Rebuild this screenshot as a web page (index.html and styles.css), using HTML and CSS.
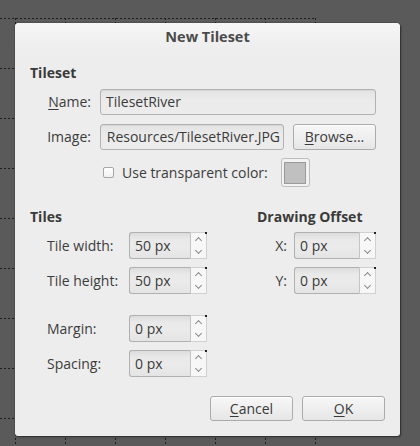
FILE: index.html
```html
<!DOCTYPE html>
<html>
<head>
<meta charset="utf-8">
<title>New Tileset</title>
<link rel="stylesheet" href="styles.css">
</head>
<body>
<svg class="map" width="420" height="446" viewBox="0 0 420 446" aria-hidden="true">
  <g stroke="#1e1e1e" stroke-width="1" stroke-dasharray="2 2" fill="none">
    <path d="M0 18.5H316M0 68.5H316M0 118.5H316M0 168.5H316M0 218.5H316M0 268.5H316M0 318.5H316M0 368.5H316M0 418.5H316"/>
    <path d="M15.5 18V446M65.5 18V446M115.5 18V446M165.5 18V446M215.5 18V446M265.5 18V446M315.5 18V446"/>
  </g>
</svg>
<div class="dialog">
  <div class="titlebar">New Tileset</div>
  <div class="content">
    <div class="group-title first">Tileset</div>
    <div class="tileset-grid">
      <label class="lbl right"><u>N</u>ame:</label>
      <div class="field">TilesetRiver</div>
      <label class="lbl right">Image:</label>
      <div class="image-row">
        <div class="field image-field"><span>Resources/TilesetRiver.JPG</span></div>
        <div class="btn browse"><u>B</u>rowse...</div>
      </div>
      <div class="check-row">
        <span class="checkbox"></span>
        <span class="check-text">Use transparent color:</span>
        <span class="swatch"><span class="swatch-inner"></span></span>
      </div>
    </div>

    <div class="tiles-section">
      <div class="tiles-group">
        <div class="group-title">Tiles</div>
        <div class="spin-grid">
          <span class="lbl">Tile width:</span>
          <div class="spin"><span class="spin-field">50 px</span><span class="spin-arrows"><span class="up"></span><span class="down"></span></span></div>
          <span class="lbl">Tile height:</span>
          <div class="spin"><span class="spin-field">50 px</span><span class="spin-arrows"><span class="up"></span><span class="down"></span></span></div>
          <span class="lbl spaced">Margin:</span>
          <div class="spin spaced"><span class="spin-field">0 px</span><span class="spin-arrows"><span class="up"></span><span class="down"></span></span></div>
          <span class="lbl">Spacing:</span>
          <div class="spin"><span class="spin-field">0 px</span><span class="spin-arrows"><span class="up"></span><span class="down"></span></span></div>
        </div>
      </div>
      <div class="offset-group">
        <div class="group-title">Drawing Offset</div>
        <div class="offset-grid">
          <span class="lbl right">X:</span>
          <div class="spin wide"><span class="spin-field">0 px</span><span class="spin-arrows"><span class="up"></span><span class="down"></span></span></div>
          <span class="lbl right">Y:</span>
          <div class="spin wide"><span class="spin-field">0 px</span><span class="spin-arrows"><span class="up"></span><span class="down"></span></span></div>
        </div>
      </div>
    </div>

    <div class="buttons">
      <div class="btn action"><u>C</u>ancel</div>
      <div class="btn action"><u>O</u>K</div>
    </div>
  </div>
</div>
</body>
</html>
```

FILE: styles.css
```css
html, body {
  margin: 0;
  padding: 0;
}
body {
  width: 420px;
  height: 446px;
  background: #5a5a5a;
  position: relative;
  overflow: hidden;
  font-family: "Open Sans", "Noto Sans", sans-serif;
  font-size: 14px;
  color: #3c3c3c;
}
.map {
  position: absolute;
  left: 0;
  top: 0;
}
.dialog {
  position: relative;
  margin: 23px 0 0 15px;
  width: 385px;
  height: 413px;
  box-sizing: border-box;
  background: #ededed;
  border-radius: 4px 4px 3px 3px;
  box-shadow: 1px 1px 2px rgba(0, 0, 0, 0.45), 0 0 0 1px rgba(0, 0, 0, 0.12);
}
.titlebar {
  height: 28px;
  line-height: 28px;
  text-align: center;
  font-weight: bold;
  font-size: 14.5px;
  color: #4b4b4b;
  background: linear-gradient(#f6f6f6, #ededed);
  border-radius: 4px 4px 0 0;
}
.content {
  padding: 0 15px 15px 15px;
}
.group-title {
  font-weight: bold;
  line-height: 18px;
  height: 18px;
  color: #3a3a3a;
}
.group-title.first {
  margin-top: 13px;
}
.lbl {
  line-height: 26px;
  white-space: nowrap;
}
.right {
  text-align: right;
}
.tileset-grid {
  display: grid;
  grid-template-columns: 44px 276px;
  column-gap: 9px;
  row-gap: 9px;
  margin: 7px 0 0 17px;
}
.field {
  height: 26px;
  box-sizing: border-box;
  border: 1px solid #b2b2b2;
  border-radius: 3px;
  background: linear-gradient(#e3e3e3, #ebebeb 40%, #ececec);
  box-shadow: inset 0 1px 1px rgba(0, 0, 0, 0.06);
  padding: 0 5px;
  line-height: 24px;
  white-space: nowrap;
  overflow: hidden;
  color: #3a3a3a;
}
.image-row {
  display: flex;
  gap: 9px;
}
.image-field {
  width: 184px;
  padding: 0 3px 0 0;
  display: flex;
  justify-content: flex-end;
}
.image-field span {
  flex: none;
}
.btn {
  box-sizing: border-box;
  border: 1px solid #ababab;
  border-radius: 3px;
  background: linear-gradient(#f7f7f7, #e6e6e6);
  box-shadow: inset 0 1px 0 rgba(255, 255, 255, 0.8);
  text-align: center;
  color: #3a3a3a;
}
.browse {
  width: 83px;
  height: 26px;
  line-height: 24px;
}
.check-row {
  grid-column: 2;
  display: flex;
  align-items: center;
  height: 29px;
  margin-top: -1px;
  padding-left: 3px;
}
.checkbox {
  width: 11px;
  height: 11px;
  box-sizing: border-box;
  border: 1px solid #a6a6a6;
  border-radius: 2px;
  background: linear-gradient(#ffffff, #f2f2f2);
}
.check-text {
  margin-left: 8px;
}
.swatch {
  margin-left: 13px;
  width: 29px;
  height: 29px;
  box-sizing: border-box;
  border: 1px solid #bdbdbd;
  border-radius: 3px;
  background: #f2f2f2;
  display: flex;
  align-items: center;
  justify-content: center;
}
.swatch-inner {
  width: 22px;
  height: 22px;
  box-sizing: border-box;
  border: 1px solid #9a9a9a;
  background: #c0c0c0;
}
.tiles-section {
  display: flex;
  margin-top: 21px;
}
.tiles-group {
  width: 227px;
}
.offset-group {
  width: 119px;
}
.spin-grid {
  display: grid;
  grid-template-columns: 82px 78px;
  row-gap: 8px;
  margin: 6px 0 0 17px;
}
.offset-grid {
  display: grid;
  grid-template-columns: 13px 82px;
  column-gap: 7px;
  row-gap: 8px;
  margin: 6px 0 0 17px;
}
.spin-grid .lbl, .offset-grid .lbl {
  line-height: 27px;
}
.spaced {
  margin-top: 13px;
}
.spin {
  display: flex;
  height: 27px;
}
.spin-field {
  flex: 1;
  box-sizing: border-box;
  border: 1px solid #b0b0b0;
  border-right: none;
  border-radius: 3px 0 0 3px;
  background: linear-gradient(#dcdcdc, #e9e9e9 25%, #ebebeb 55%, #e4e4e4);
  padding-left: 5px;
  line-height: 25px;
  color: #3a3a3a;
}
.spin-arrows {
  width: 17px;
  box-sizing: border-box;
  background: #f7f7f7;
  border: 1px solid #d0d0d0;
  border-left: 1px solid #c4c4c4;
  display: flex;
  flex-direction: column;
  position: relative;
}
.spin-arrows::after {
  content: "";
  position: absolute;
  right: -1px;
  top: -1px;
  width: 2px;
  height: 2px;
  background: #222;
}
.spin-arrows .up, .spin-arrows .down {
  flex: 1;
  position: relative;
}
.spin-arrows .up::before, .spin-arrows .down::before {
  content: "";
  position: absolute;
  left: 5px;
  width: 4px;
  height: 4px;
  border-left: 1.5px solid #8a8a8a;
  border-top: 1.5px solid #8a8a8a;
}
.spin-arrows .up::before {
  top: 5px;
  transform: rotate(45deg);
}
.spin-arrows .down::before {
  top: 2px;
  transform: rotate(225deg);
}
.buttons {
  display: flex;
  justify-content: flex-end;
  gap: 9px;
  margin-top: 19px;
}
.action {
  width: 83px;
  height: 25px;
  line-height: 23px;
}
u {
  text-decoration-thickness: 1px;
  text-underline-offset: 2px;
}
```
